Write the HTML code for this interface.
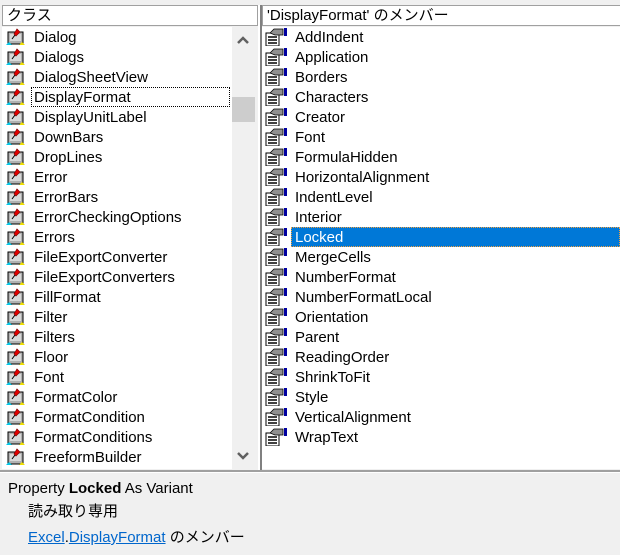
<!DOCTYPE html>
<html><head><meta charset="utf-8"><style>
*{margin:0;padding:0;box-sizing:border-box}
body{width:620px;height:555px;background:#f0f0f0;position:relative;overflow:hidden;font-family:"Liberation Sans","Noto Sans CJK JP",sans-serif;font-size:15px;color:#000}
.hdr{position:absolute;top:5px;height:21px;background:#fff;border:1px solid #a0a0a0;line-height:19px;padding-left:4px;font-size:15px}
.list{position:absolute;top:27px;background:#fff}
.row{position:absolute;height:20px;line-height:20px;white-space:nowrap}
.row svg{position:absolute;top:1px}
.row span{position:absolute;top:1px}
.sb{position:absolute;left:232px;top:27px;width:23px;height:442px;background:#f0f0f0}
</style></head><body>
<div class="hdr" style="left:2px;width:256px">クラス</div>
<div class="hdr" style="left:262px;width:358px;border-right:none">'DisplayFormat' のメンバー</div>
<div class="list" style="left:2px;top:27px;width:230px;height:442px"></div>
<div class="sb">
<svg width="23" height="442" style="position:absolute;left:0;top:0"><path d="M6 16 L11 11 L16 16" stroke="#606060" stroke-width="2.5" fill="none"/><rect x="0" y="70" width="23" height="25" fill="#cdcdcd"/><path d="M6 426 L11 431 L16 426" stroke="#606060" stroke-width="2.5" fill="none"/></svg>
</div>
<div style="position:absolute;left:258px;top:5px;width:2px;height:465px;background:#fff"></div>
<div style="position:absolute;left:260px;top:5px;width:2px;height:465px;background:#808080"></div>
<div class="list" style="left:262px;top:27px;width:358px;height:442px"></div>
<div style="position:absolute;left:0;top:470px;width:620px;height:2px;background:#a0a0a0"></div>
<div style="position:absolute;left:0;top:472px;width:620px;height:1px;background:#fff"></div>
<div id="L"></div><div id="R"></div>
<div style="position:absolute;left:291px;top:227px;width:329px;height:20px;background:#0078d7;outline:1px dotted #f0a040;outline-offset:-1px"></div>
<div style="position:absolute;left:31px;top:87px;width:199px;height:20px;border:1px dotted #000"></div>
<div style="position:absolute;left:8px;top:479px;line-height:20px">Property <b>Locked</b> As Variant</div>
<div style="position:absolute;left:28px;top:502px;line-height:20px">読み取り専用</div>
<div style="position:absolute;left:28px;top:528px;line-height:20px"><span style="color:#0066cc;text-decoration:underline">Excel</span>.<span style="color:#0066cc;text-decoration:underline">DisplayFormat</span> のメンバー</div>
<script>
var cls=["Dialog","Dialogs","DialogSheetView","DisplayFormat","DisplayUnitLabel","DownBars","DropLines","Error","ErrorBars","ErrorCheckingOptions","Errors","FileExportConverter","FileExportConverters","FillFormat","Filter","Filters","Floor","Font","FormatColor","FormatCondition","FormatConditions","FreeformBuilder"];
var mem=["AddIndent","Application","Borders","Characters","Creator","Font","FormulaHidden","HorizontalAlignment","IndentLevel","Interior","Locked","MergeCells","NumberFormat","NumberFormatLocal","Orientation","Parent","ReadingOrder","ShrinkToFit","Style","VerticalAlignment","WrapText"];
var ci='<svg width="22" height="18" style="left:5px"><rect x="3" y="4" width="15" height="12" fill="#b0b0b0" stroke="#000"/><rect x="5" y="6" width="11" height="7" fill="#d8d8d8"/><path d="M12 1 L15 4 L11 8 L9 6 Z" fill="#e00000" stroke="#800000" stroke-width=".7"/><path d="M10 7 L7 11" stroke="#000"/><path d="M1 17 L4 14 L7 17Z" fill="#00c8e8"/><path d="M14 17 L17 14 L20 17Z" fill="#f0e000"/></svg>';
var mi='<svg width="24" height="18" style="left:3px"><rect x="1" y="5" width="13" height="13" fill="#fff" stroke="#000"/><path d="M3 9h9M3 12h9M3 15h9" stroke="#000" stroke-width="1.5"/><path d="M5 5 L9 1 L18 1 L18 7 L10 7 Z" fill="#909090" stroke="#000" stroke-width=".8"/><rect x="19" y="0" width="3" height="8" fill="#0000a0"/></svg>';
var h='';
cls.forEach(function(t,i){var y=27+i*20;h+='<div class="row" style="left:0;top:'+y+'px;width:230px">'+ci+'<span style="left:34px">'+t+'</span></div>';});
mem.forEach(function(t,i){var y=27+i*20;h+='<div class="row" style="left:262px;top:'+y+'px;width:358px;z-index:2">'+mi+'<span style="left:33px;'+(t=="Locked"?'color:#fff':'')+'">'+t+'</span></div>';});
document.getElementById('L').innerHTML=h;
</script>
</body></html>
